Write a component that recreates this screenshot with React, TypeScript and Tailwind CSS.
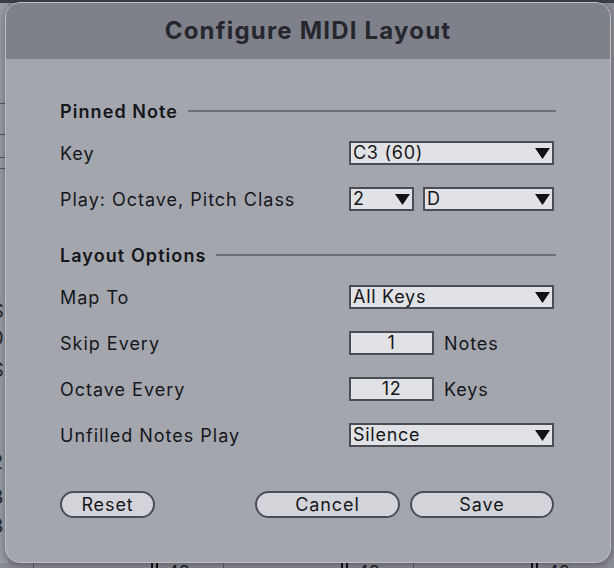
import React from 'react';

function Arrow() {
  return (
    <svg width="15" height="11" viewBox="0 0 15 11" className="shrink-0">
      <path d="M0 0H15L7.5 11Z" fill="#111216" />
    </svg>
  );
}

function Select({ value, width }: { value: string; width: string }) {
  return (
    <div className={`flex h-[24px] items-center justify-between border-2 border-[#4a4c56] bg-[#e1e2e6] pl-[2px] pr-[2px] ${width}`}>
      <span className="text-[18px] leading-none tracking-[0.04em] text-[#15161a]">{value}</span>
      <Arrow />
    </div>
  );
}

function NumberBox({ value, unit }: { value: string; unit: string }) {
  return (
    <div className="flex items-center gap-[10px]">
      <div className="flex h-[24px] w-[85px] items-center justify-center border-2 border-[#4a4c56] bg-[#e1e2e6] text-[18px] leading-none tracking-[0.04em] text-[#15161a]">
        {value}
      </div>
      <span className="text-[18px] tracking-[0.05em] text-[#15161a]">{unit}</span>
    </div>
  );
}

function Row({ label, children }: { label: string; children: React.ReactNode }) {
  return (
    <div className="flex h-[46px] items-center">
      <div className="w-[289px] text-[18px] tracking-[0.055em] text-[#15161a]">{label}</div>
      {children}
    </div>
  );
}

function Section({ title }: { title: string }) {
  return (
    <div className="flex h-[38px] items-center gap-[10px]">
      <span className="text-[18px] font-semibold tracking-[0.06em] text-[#15161a]">{title}</span>
      <div className="h-[2px] flex-1 bg-[#6c6e78]" />
    </div>
  );
}

function Button({ label, width }: { label: string; width: string }) {
  return (
    <button className={`flex h-[27px] items-center justify-center rounded-full border-2 border-[#4b4d57] bg-[#d3d4d9] text-[18px] leading-none tracking-[0.05em] text-[#15161a] ${width}`}>
      {label}
    </button>
  );
}

export default function App() {
  const leftMarks = [
    { ch: 'S', mt: 'mt-[131px]' },
    { ch: '0', mt: 'mt-[5px]' },
    { ch: 'S', mt: 'mt-[10px]' },
    { ch: '1', mt: 'mt-[12px]' },
    { ch: '1', mt: 'mt-[7px]' },
    { ch: '2', mt: 'mt-[7px]' },
    { ch: '3', mt: 'mt-[13px]' },
    { ch: '3', mt: 'mt-[7px]' },
  ];

  return (
    <div className="relative h-[568px] w-[614px] overflow-hidden bg-[#8e9097] font-[Inter,sans-serif]">
      {/* background app peeking out behind the dialog */}
      <div className="flex h-full flex-col">
        <div className="h-[3px] bg-[#3d3f47]" />
        <div className="flex flex-1">
          <div className="flex w-[8px] flex-col bg-[#9a9ca3] text-[20px] leading-[22px] text-[#2a2b30]">
            <div className="mt-[100px] h-px bg-[#555760]" />
            <div className="mt-[30px] h-px bg-[#555760]" />
            <div className="mt-[22px] h-px bg-[#555760]" />
            <div className="mt-[10px] h-px bg-[#555760]" />
            {leftMarks.map((m, i) => (
              <span key={i} className={`${m.mt} -ml-[9px]`}>
                {m.ch}
              </span>
            ))}
          </div>
        </div>
        <div className="flex h-[5px] bg-[#8a8c93] text-[18px] leading-[18px] text-[#1e1f24]">
          {[0, 1, 2].map((i) => (
            <div key={i} className="flex w-[190px] shrink-0 items-start">
              <div className="ml-[33px] h-[5px] w-[3px] bg-[#5c5e66]" />
              <div className="ml-[117px] h-[5px] w-[11px] bg-[#111216]" />
              <div className="ml-[3px] h-[5px] w-[11px] bg-[#111216]" />
              <span className="ml-[9px] mt-[1px]">48</span>
            </div>
          ))}
        </div>
      </div>

      {/* dialog */}
      <div className="absolute left-[5px] top-[2px] flex h-[561px] w-[606px] flex-col overflow-hidden rounded-[15px] border border-[#bfc1c7] bg-[#a4a6ae] shadow-[0_2px_8px_rgba(0,0,0,0.35)]">
        <div className="flex h-[56px] items-center justify-center bg-[#7e808a]">
          <h1 className="text-[24px] font-bold tracking-[0.05em] text-[#26272c]">Configure MIDI Layout</h1>
        </div>

        <div className="flex flex-col px-[54px] pt-[33px]">
          <Section title="Pinned Note" />
          <Row label="Key">
            <Select value="C3 (60)" width="w-[205px]" />
          </Row>
          <Row label="Play: Octave, Pitch Class">
            <div className="flex gap-[9px]">
              <Select value="2" width="w-[65px]" />
              <Select value="D" width="w-[131px]" />
            </div>
          </Row>

          <div className="mt-[14px]">
            <Section title="Layout Options" />
          </div>
          <Row label="Map To">
            <Select value="All Keys" width="w-[205px]" />
          </Row>
          <Row label="Skip Every">
            <NumberBox value="1" unit="Notes" />
          </Row>
          <Row label="Octave Every">
            <NumberBox value="12" unit="Keys" />
          </Row>
          <Row label="Unfilled Notes Play">
            <Select value="Silence" width="w-[205px]" />
          </Row>

          <div className="mt-[33px] flex items-center">
            <Button label="Reset" width="w-[95px]" />
            <div className="flex-1" />
            <Button label="Cancel" width="w-[145px]" />
            <div className="w-[10px]" />
            <Button label="Save" width="w-[144px]" />
            <div className="w-[2px]" />
          </div>
        </div>
      </div>
    </div>
  );
}
